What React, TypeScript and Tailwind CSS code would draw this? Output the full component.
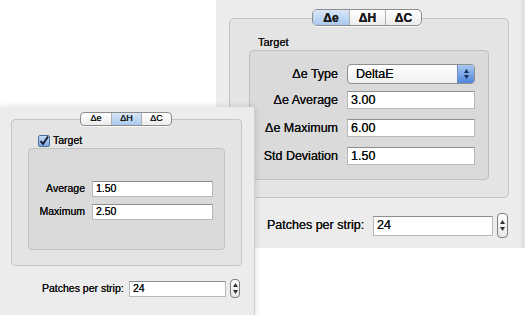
import React from "react";

const font = { fontFamily: '"Liberation Sans", Arial, sans-serif' };

function Segmented({ labels, active, small }: { labels: string[]; active: number; small?: boolean }) {
  return (
    <div
      className={
        "flex overflow-hidden border border-[#8c8c8c] bg-gradient-to-b from-white to-[#ececec] shadow-[0_1px_0_rgba(255,255,255,0.8)] " +
        (small ? "h-[14px] rounded-[4px]" : "h-[17px] rounded-[5px]")
      }
    >
      {labels.map((l, i) => (
        <div
          key={l}
          className={
            "flex items-center justify-center text-[#1a1a1a] " +
            (i > 0 ? "border-l border-[#b0b0b0] " : "") +
            (i === active ? "bg-gradient-to-b from-[#d9e7f8] to-[#a9c8ef] " : "") +
            (small ? "w-[30px] text-[9px] [text-shadow:0_0_0.3px_#000]" : "w-[36px] text-[12px] font-bold")
          }
        >
          {l}
        </div>
      ))}
    </div>
  );
}

function TextField({ value, className }: { value: string; className: string }) {
  return (
    <div
      className={
        "flex items-center bg-white border border-[#b8b8b8] border-t-[#8e8e8e] pl-[3px] text-[#111] " + className
      }
    >
      {value}
    </div>
  );
}

function Stepper({ className }: { className: string }) {
  return (
    <div
      className={
        "flex flex-col items-center justify-center gap-[3px] rounded-[4px] border border-[#7c7c7c] bg-gradient-to-b from-white to-[#e6e6e6] " +
        className
      }
    >
      <svg width="5" height="4" viewBox="0 0 5 4">
        <path d="M2.5 0L5 4H0z" fill="#333" />
      </svg>
      <svg width="5" height="4" viewBox="0 0 5 4">
        <path d="M0 0H5L2.5 4z" fill="#333" />
      </svg>
    </div>
  );
}

function BackPanel() {
  const row = "flex items-center h-[18px]";
  const label = "w-[97px] text-right pr-[9px] whitespace-nowrap";
  return (
    <div
      className="absolute left-[216px] top-0 w-[309px] h-[248px] bg-[#ececec] border-r-[4px] border-[#e2e2e2] text-[12.5px] text-[#111] [text-shadow:0_0_0.25px_#000]"
      style={font}
    >
      <div className="relative ml-[13px] mt-[18px] w-[280px] h-[180px] rounded-[5px] border border-[#c4c4c4] bg-[#e4e4e4]">
        <div className="absolute left-[82px] top-[-10px]">
          <Segmented labels={["Δe", "ΔH", "ΔC"]} active={0} />
        </div>
        <div className="pl-[28px] pt-[17px] text-[11px] leading-[13px]">Target</div>
        <div className="ml-[19px] mt-[1px] w-[240px] h-[130px] rounded-[4px] border border-[#c0c0c0] bg-[#dadada] pt-[13px]">
          <div className="flex items-center h-[20px]">
            <div className={label}>Δe Type</div>
            <div className="flex w-[128px] h-[20px] rounded-[4px] border border-[#8f8f8f] bg-gradient-to-b from-white to-[#f0f0f0] overflow-hidden">
              <div className="flex-1 flex items-center pl-[8px]">DeltaE</div>
              <div className="w-[17px] flex flex-col items-center justify-center gap-[2px] bg-gradient-to-b from-[#a9c9f3] to-[#4f86d9] border-l border-[#6d8fc4]">
                <svg width="5" height="4" viewBox="0 0 5 4">
                  <path d="M2.5 0L5 4H0z" fill="#1d2f55" />
                </svg>
                <svg width="5" height="4" viewBox="0 0 5 4">
                  <path d="M0 0H5L2.5 4z" fill="#1d2f55" />
                </svg>
              </div>
            </div>
          </div>
          <div className={row + " mt-[7px]"}>
            <div className={label}>Δe Average</div>
            <TextField value="3.00" className="w-[128px] h-[18px]" />
          </div>
          <div className={row + " mt-[10px]"}>
            <div className={label}>Δe Maximum</div>
            <TextField value="6.00" className="w-[128px] h-[18px]" />
          </div>
          <div className={row + " mt-[10px]"}>
            <div className={label}>Std Deviation</div>
            <TextField value="1.50" className="w-[128px] h-[18px]" />
          </div>
        </div>
      </div>
      <div className="flex items-center mt-[15px] pl-[51px]">
        <div className="w-[106px] whitespace-nowrap">Patches per strip:</div>
        <TextField value="24" className="w-[120px] h-[20px]" />
        <Stepper className="ml-[4px] w-[11px] h-[25px]" />
      </div>
    </div>
  );
}

function FrontPanel() {
  const label = "w-[63px] text-right pr-[7px] whitespace-nowrap";
  return (
    <div
      className="absolute left-0 top-[107px] w-[255px] h-[208px] bg-[#ececec] border-r border-[#cfcfcf] shadow-[0_0_6px_rgba(0,0,0,0.15)] text-[10.5px] text-[#111] [text-shadow:0_0_0.2px_#000]"
      style={font}
    >
      <div className="relative ml-[11px] mt-[12px] w-[231px] h-[147px] rounded-[4px] border border-[#c4c4c4] bg-[#e4e4e4]">
        <div className="absolute left-[68px] top-[-8px]">
          <Segmented labels={["Δe", "ΔH", "ΔC"]} active={1} small />
        </div>
        <div className="flex items-center gap-[3px] pl-[26px] pt-[14px] h-[27px]">
          <div className="w-[12px] h-[12px] rounded-[2px] border border-[#4d6c9e] bg-gradient-to-b from-[#c9dcf5] to-[#7fa6de] flex items-center justify-center">
            <svg width="10" height="10" viewBox="0 0 10 10">
              <path d="M1.5 5L4 8L9 0.5" stroke="#10182a" strokeWidth="1.8" fill="none" />
            </svg>
          </div>
          <span>Target</span>
        </div>
        <div className="ml-[16px] mt-[1px] w-[197px] h-[102px] rounded-[4px] border border-[#c2c2c2] bg-[#dadada] pt-[32px]">
          <div className="flex items-center h-[16px]">
            <div className={label}>Average</div>
            <TextField value="1.50" className="w-[121px] h-[16px]" />
          </div>
          <div className="flex items-center h-[16px] mt-[7px]">
            <div className={label}>Maximum</div>
            <TextField value="2.50" className="w-[121px] h-[16px]" />
          </div>
        </div>
      </div>
      <div className="flex items-center mt-[13px] pl-[42px]">
        <div className="w-[87px] whitespace-nowrap">Patches per strip:</div>
        <TextField value="24" className="w-[97px] h-[16px]" />
        <Stepper className="ml-[4px] w-[10px] h-[19px]" />
      </div>
    </div>
  );
}

export default function App() {
  return (
    <div className="relative w-[525px] h-[315px] bg-white overflow-hidden">
      <BackPanel />
      <FrontPanel />
    </div>
  );
}
